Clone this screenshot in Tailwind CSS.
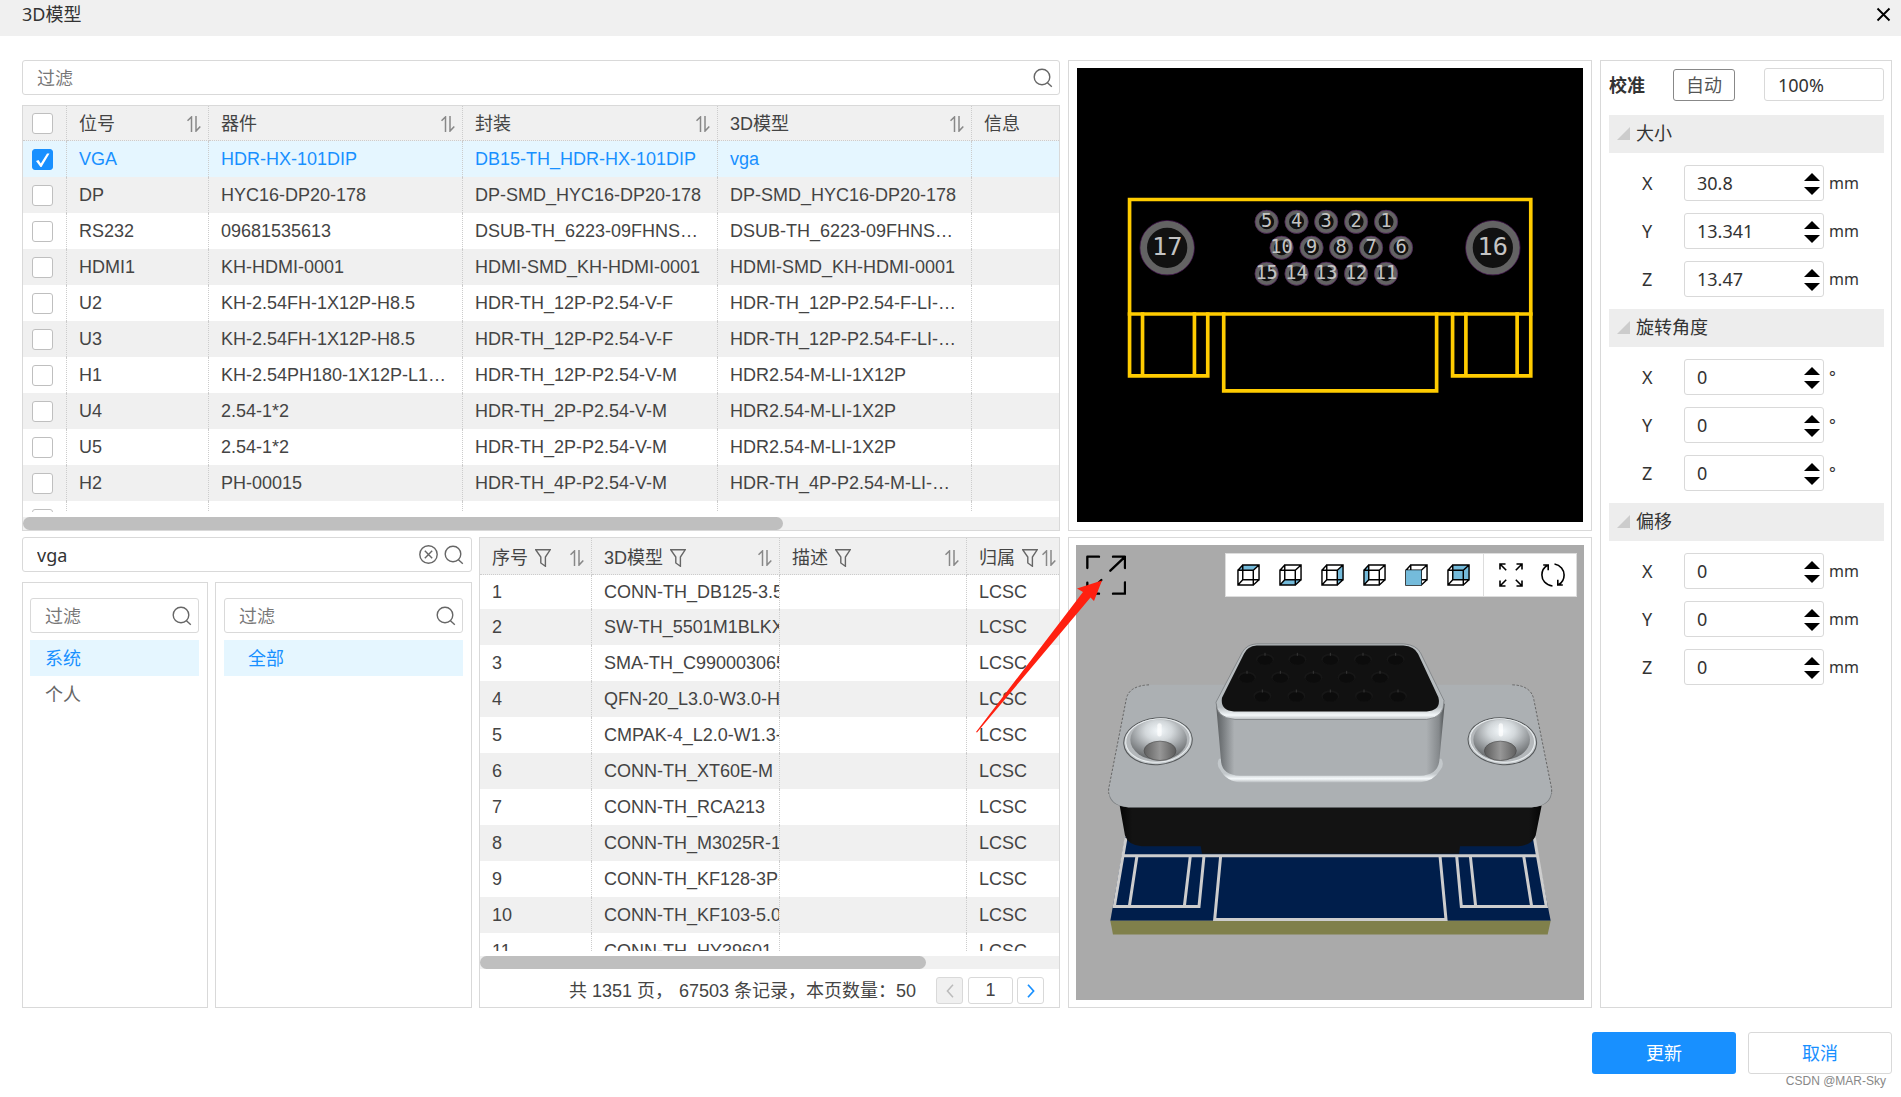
<!DOCTYPE html>
<html lang="zh-CN">
<head>
    <meta charset="UTF-8">
    <meta name="viewport" content="width=device-width, initial-scale=1.0">
    <title>3D模型</title>
    <script src="https://cdn.jsdelivr.net/npm/@tailwindcss/browser@4"></script>
</head>
<body class="relative flex flex-col h-screen min-h-[900px] bg-white text-[18px] leading-6 text-[#333] font-['Noto_Sans','Noto_Sans_CJK_SC',sans-serif]">

    <!-- Icon sprite -->
    <svg class="hidden" aria-hidden="true">
        <symbol id="i-search" viewBox="0 0 20 20"><g fill="none" stroke="currentColor" stroke-width="1.4"><circle cx="9" cy="9" r="7.8"/><path d="M14.2 14.6 18.8 18.8"/></g></symbol>
        <symbol id="i-sort" viewBox="0 0 14 16"><path d="M.5 4.8 4.5.9V16M9 0v15.1l4.3-4.6" fill="none" stroke="currentColor" stroke-width="1.5"/></symbol>
        <symbol id="i-filter" viewBox="0 0 16 18"><path d="M.8.8h14.4L10.4 8v9.2L5.8 14V8z" fill="none" stroke="currentColor" stroke-width="1.4"/></symbol>
        <symbol id="i-up" viewBox="0 0 16 8"><path d="M0 8 8 0l8 8z"/></symbol>
        <symbol id="i-down" viewBox="0 0 16 8"><path d="M0 0h16L8 8z"/></symbol>
        <symbol id="i-cube" viewBox="0 0 24 24"><path d="M1 6.5h16V22H1zM6 1h17v15.5H6zM1 6.5 6 1M17 6.5 23 1M17 22l6-5.5M1 22l5-5.5" fill="none" stroke="#000" stroke-width="1.5"/></symbol>
    </svg>

    <!-- Title bar -->
    <header class="flex items-center justify-between h-9 shrink-0 bg-[#f0f0f0] pl-[22px] pr-2.5 pb-2">
        <h1>3D模型</h1>
        <button type="button" aria-label="关闭" class="text-black">
            <svg class="w-[15px] h-[15px]" viewBox="0 0 15 15"><path d="M1.5 1.5l12 12M13.5 1.5l-12 12" stroke="currentColor" stroke-width="1.9"/></svg>
        </button>
    </header>

    <main class="grid grid-cols-[minmax(0,1038fr)_minmax(0,524fr)_292px] grid-rows-[minmax(0,1fr)_minmax(0,1fr)] gap-x-2 gap-y-1.5 flex-1 min-h-0 pt-6 pl-[22px] pr-[9px]">

        <!-- Component list -->
        <section class="flex flex-col gap-2.5 min-h-0">
            <label class="flex items-center h-[35px] shrink-0 border border-[#d9d9d9] rounded-[3px] pl-3.5 pr-1.5">
                <input type="text" placeholder="过滤" aria-label="过滤器件" class="flex-1 min-w-0 outline-none placeholder:text-[#777]">
                <svg class="w-5 h-5 text-[#666]"><use href="#i-search"/></svg>
            </label>
            <div class="flex flex-col flex-1 min-h-0 border border-[#d9d9d9]">
                <div class="flex-1 min-h-0 overflow-hidden">
                    <table class="table-fixed w-full border-separate border-spacing-0 text-left text-[#444] font-['Liberation_Sans','Noto_Sans_CJK_SC',sans-serif]">
                        <colgroup>
                            <col class="w-11"><col class="w-[142px]"><col class="w-[254px]"><col class="w-[255px]"><col class="w-[254px]"><col>
                        </colgroup>
                        <thead id="parts-head"></thead>
                        <tbody id="parts-body"></tbody>
                    </table>
                </div>
                <div class="h-[18px] shrink-0 bg-[#f0f0f0] border-t-[5px] border-white">
                    <div class="h-[13px] w-[73.4%] rounded-full bg-[#bfbfbf]"></div>
                </div>
            </div>
        </section>

        <!-- Footprint preview -->
        <section class="border border-[#d9d9d9] px-2 pt-[7px] pb-2 min-h-0 row-start-1 col-start-2">
            <svg class="w-full h-full bg-black" viewBox="21 -336 1521 1362" role="img" aria-label="封装预览">
                <g fill="none" stroke="#ffcc00" stroke-width="11" stroke-linecap="square">
                    <path d="M179 58H1385V402H179z"/>
                    <path d="M179 402V588H414V402M218 402V588M374 402V588"/>
                    <path d="M462 402V633H1102V402"/>
                    <path d="M1385 402V588H1150V402M1190 402V588M1344 402V588"/>
                </g>
                <g id="pads" fill="#c4c4c4" text-anchor="middle" font-family="'DejaVu Sans Mono', monospace"></g>
            </svg>
        </section>

        <!-- Calibration -->
        <aside class="row-span-2 row-start-1 col-start-3 border border-[#d9d9d9] pl-2 pr-[7px] pt-[7px] min-h-0 overflow-hidden">
            <div class="flex items-center mb-3.5">
                <h2 class="w-16 font-bold">校准</h2>
                <button type="button" class="w-[62px] h-8 border border-[#888] rounded-[3px] text-[#555]">自动</button>
                <input type="text" value="100%" aria-label="缩放比例" class="ml-auto w-[120px] h-[33px] px-[13px] border border-[#d9d9d9] rounded-[3px]">
            </div>
            <div id="calibration" class="flex flex-col gap-3"></div>
        </aside>

        <!-- Model library -->
        <section class="grid grid-cols-[minmax(0,450fr)_minmax(0,581fr)] gap-x-[7px] row-start-2 col-start-1 min-h-0">
            <div class="flex flex-col gap-2.5 min-h-0">
                <label class="flex items-center gap-1.5 h-[35px] shrink-0 border border-[#d9d9d9] rounded-[3px] pl-3.5 pr-[7px]">
                    <input type="text" value="vga" aria-label="搜索3D模型" class="flex-1 min-w-0 outline-none">
                    <button type="button" aria-label="清除" class="text-[#666]">
                        <svg class="w-[19px] h-[19px]" viewBox="0 0 19 19" fill="none" stroke="currentColor" stroke-width="1.4"><circle cx="9.5" cy="9.5" r="8.7"/><path d="M5.8 5.8l7.4 7.4M13.2 5.8l-7.4 7.4"/></svg>
                    </button>
                    <svg class="w-5 h-5 text-[#666]"><use href="#i-search"/></svg>
                </label>
                <div class="grid grid-cols-[minmax(0,186fr)_minmax(0,257fr)] gap-x-[7px] flex-1 min-h-0">
                    <div class="border border-[#d9d9d9] pl-[7px] pr-2 pt-[15px]">
                        <label class="flex items-center h-[35px] border border-[#d9d9d9] rounded-[3px] pl-3.5 pr-1.5 mb-[7px]">
                            <input type="text" placeholder="过滤" aria-label="过滤库" class="flex-1 min-w-0 outline-none placeholder:text-[#777]">
                            <svg class="w-5 h-5 text-[#666]"><use href="#i-search"/></svg>
                        </label>
                        <ul class="leading-9 text-[#666]">
                            <li class="bg-[#e5f6ff] text-[#1890ff] pl-[15px]">系统</li>
                            <li class="pl-[15px]">个人</li>
                        </ul>
                    </div>
                    <div class="border border-[#d9d9d9] px-2 pt-[15px]">
                        <label class="flex items-center h-[35px] border border-[#d9d9d9] rounded-[3px] pl-3.5 pr-1.5 mb-[7px]">
                            <input type="text" placeholder="过滤" aria-label="过滤分类" class="flex-1 min-w-0 outline-none placeholder:text-[#777]">
                            <svg class="w-5 h-5 text-[#666]"><use href="#i-search"/></svg>
                        </label>
                        <ul class="leading-9">
                            <li class="bg-[#e5f6ff] text-[#1890ff] pl-6">全部</li>
                        </ul>
                    </div>
                </div>
            </div>

            <div class="flex flex-col min-h-0 border border-[#d9d9d9] text-[#444] font-['Liberation_Sans','Noto_Sans_CJK_SC',sans-serif]">
                <div class="flex-1 min-h-0 overflow-hidden">
                    <table class="table-fixed w-full border-separate border-spacing-0 text-left">
                        <colgroup>
                            <col class="w-28"><col class="w-[188px]"><col class="w-[187px]"><col>
                        </colgroup>
                        <thead id="models-head"></thead>
                        <tbody id="models-body"></tbody>
                    </table>
                </div>
                <div class="h-[18px] shrink-0 bg-[#f0f0f0] border-t-[5px] border-white">
                    <div class="h-[13px] w-[77%] rounded-full bg-[#bfbfbf]"></div>
                </div>
                <nav class="flex items-center justify-end h-[38px] shrink-0 pt-[5px] pr-[15px]" aria-label="分页">
                    <span class="mr-1.5">共 1351 页，</span>
                    <span class="mr-5">67503 条记录，本页数量：50</span>
                    <button type="button" aria-label="上一页" class="flex items-center justify-center w-[27px] h-[27px] border border-[#d9d9d9] rounded-[3px] bg-[#f0f0f0] text-[#bbb] mr-[5px]">
                        <svg class="w-2 h-3.5" viewBox="0 0 8 14"><path d="M7 .7 1.4 7 7 13.3" fill="none" stroke="currentColor" stroke-width="1.5"/></svg>
                    </button>
                    <input type="text" value="1" aria-label="页码" class="w-[45px] h-[27px] border border-[#d9d9d9] rounded-[3px] text-center mr-1">
                    <button type="button" aria-label="下一页" class="flex items-center justify-center w-[27px] h-[27px] border border-[#d9d9d9] rounded-[3px] text-[#1890ff]">
                        <svg class="w-2 h-3.5" viewBox="0 0 8 14"><path d="M1 .7 6.6 7 1 13.3" fill="none" stroke="currentColor" stroke-width="1.7"/></svg>
                    </button>
                </nav>
            </div>
        </section>

        <!-- 3D preview -->
        <section class="border border-[#d9d9d9] p-[7px] row-start-2 col-start-2 min-h-0">
            <div class="relative h-full bg-[#aaa]">
                <svg class="w-full h-full" viewBox="18 45 1524 1362" role="img" aria-label="3D预览">
                    <defs>
                        <linearGradient id="shell" x1="438" x2="1124" y1="0" y2="0" gradientUnits="userSpaceOnUse">
                            <stop offset="0" stop-color="#5d6062"/><stop offset=".025" stop-color="#73777a"/><stop offset=".08" stop-color="#acb0b3"/>
                            <stop offset=".92" stop-color="#acb0b3"/><stop offset=".975" stop-color="#85898c"/><stop offset="1" stop-color="#4d5052"/>
                        </linearGradient>
                        <linearGradient id="lip" x1="0" x2="0" y1="530" y2="570" gradientUnits="userSpaceOnUse">
                            <stop offset="0" stop-color="#b7bcbf"/><stop offset=".6" stop-color="#f4f8fa"/><stop offset="1" stop-color="#acb0b3"/>
                        </linearGradient>
                        <linearGradient id="skirt" x1="0" x2="0" y1="730" y2="757" gradientUnits="userSpaceOnUse">
                            <stop offset="0" stop-color="#c3c8cb"/><stop offset=".55" stop-color="#f6fafc"/><stop offset="1" stop-color="#b0b4b7"/>
                        </linearGradient>
                        <radialGradient id="sink" cx=".5" cy=".28" r=".68">
                            <stop offset="0" stop-color="#f3f8fb"/><stop offset=".35" stop-color="#d3d8db"/><stop offset=".7" stop-color="#999da0"/><stop offset="1" stop-color="#6b6e70"/>
                        </radialGradient>
                        <linearGradient id="bore"><stop offset="0" stop-color="#606060"/><stop offset=".5" stop-color="#979797"/><stop offset="1" stop-color="#5c5c5c"/></linearGradient>
                        <linearGradient id="base"><stop offset="0" stop-color="#050505"/><stop offset=".03" stop-color="#131313"/><stop offset=".97" stop-color="#131313"/><stop offset="1" stop-color="#050505"/></linearGradient>
                    </defs>

                    <!-- board -->
                    <path d="M165 920H1393L1442 1171H121z" fill="#001e4b"/>
                    <path d="M121 1171H1442L1433 1212H129z" fill="#80804b"/>
                    <g fill="none" stroke="#cdcdcd" stroke-width="9">
                        <path d="M160 976H1402M168 922 133 1128H387L402 976M201 976 178 1128M361 976 343 1128"/>
                        <path d="M452 976 434 1167H1128L1110 976"/>
                        <path d="M1393 922 1429 1128H1174L1160 976M1201 976 1217 1128M1361 976 1385 1128"/>
                    </g>
                    <path d="M149 825 165 915Q175 945 215 947H392L396 970H1167L1170 947H1345Q1385 945 1397 915L1415 825z" fill="url(#base)"/>

                    <!-- flange -->
                    <path d="M117 790Q119 826 175 831H1385Q1441 826 1445 790V775H116z" fill="#7d8184"/>
                    <path d="M237 463H1327Q1385 465 1392 510L1445 775Q1443 828 1385 830H175Q117 826 116 775L169 505Q177 466 237 463z" fill="#acb0b3"/>
                    <path d="M237 463Q177 466 169 505L116 775V790M1327 463Q1385 465 1392 510L1445 775V790" fill="none" stroke="#666" stroke-width="3" stroke-dasharray="7 5"/>

                    <!-- mounting holes -->
                    <g id="sink-left">
                        <ellipse cx="264" cy="632" rx="103" ry="70" transform="rotate(-5 264 632)" fill="#c6cbce" stroke="#55585a" stroke-width="3"/>
                        <ellipse cx="264" cy="630" rx="97" ry="65" transform="rotate(-5 264 630)" fill="#b4b8bb" stroke="#e8ecee" stroke-width="3"/>
                        <ellipse cx="266" cy="628" rx="85" ry="61" fill="url(#sink)"/>
                        <rect x="262" y="578" width="13" height="40" rx="6" fill="#fff" opacity=".7"/>
                        <ellipse cx="270" cy="661" rx="48" ry="29" fill="url(#bore)" stroke="#4c4c4c" stroke-width="2"/>
                    </g>
                    <use href="#sink-left" transform="matrix(-1 0 0 1 1561 0)"/>

                    <!-- shell -->
                    <path d="M447 685Q438 702 450 717 470 755 515 756H1048Q1090 754 1112 717 1124 702 1114 685z" fill="url(#skirt)"/>
                    <path d="M438 520 453 690Q455 733 510 736H1050Q1104 733 1108 690L1124 520z" fill="url(#shell)"/>
                    <path d="M560 340H1000Q1040 343 1052 368L1122 510Q1124 560 1070 567H495Q438 562 438 515L517 365Q530 342 560 340z" fill="url(#lip)" stroke="#6f7375" stroke-width="2"/>
                    <path d="M560 345H1000Q1033 347 1044 370L1105 500Q1115 540 1070 543H492Q450 540 456 502L522 370Q532 347 560 345z" fill="#111"/>
                    <g id="sockets"></g>
                </svg>

                <button type="button" aria-label="全屏" class="absolute left-2.5 top-2.5">
                    <svg class="w-10 h-10" viewBox="49 75 120 120" fill="none" stroke="#000" stroke-width="7" stroke-linecap="round" stroke-linejoin="round">
                        <path d="M53 114V80H88M130 80H166V114M122 122 164 82M53 158V191H88M95 150 55 189M130 191H166V157"/>
                    </svg>
                </button>

                <div class="absolute right-[7px] top-2 flex h-11 bg-white border border-[#ddd]">
                    <div id="views" class="flex pl-px pr-1 border-r border-[#ddd]"></div>
                    <div class="flex pl-1.5 pr-0.5">
                        <button type="button" aria-label="适应窗口" class="flex items-center justify-center w-[42px]">
                            <svg class="w-6 h-6" viewBox="0 0 24 24" fill="none" stroke="#000" stroke-width="1.6"><path d="M7.2 7.2 1.5 1.5M1 6.5V1H6.5M16.8 7.2 22.5 1.5M17.5 1H23V6.5M7.2 16.8 1.5 22.5M1 17.5V23H6.5M16.8 16.8 22.5 22.5M23 17.5V23H17.5"/></svg>
                        </button>
                        <button type="button" aria-label="重置视角" class="flex items-center justify-center w-[42px]">
                            <svg class="w-6 h-6" viewBox="0 0 24 24" fill="none" stroke="#000" stroke-width="1.6"><path d="M11.5 23C4.5 22 .9 17.2.9 12 .9 8 3 4.2 6.5 2.2M2.2 2H7.2V7.2M13.5 1C19.5 2 23.1 7 23.1 12 23.1 16 21 19.8 17.500 21.800M21.800 22H16.800V16.800"/></svg>
                        </button>
                    </div>
                </div>
            </div>
        </section>
    </main>

    <footer class="flex justify-end gap-3 shrink-0 pt-6 pr-[9px] pb-[23px]">
        <button type="button" class="w-36 h-[42px] rounded-[3px] bg-[#1890ff] text-white">更新</button>
        <button type="button" class="w-36 h-[42px] rounded-[3px] border border-[#d9d9d9] text-[#1890ff]">取消</button>
    </footer>
    <p class="absolute right-[15px] bottom-2 text-xs leading-4 text-[#888] font-['Liberation_Sans',sans-serif]">CSDN @MAR-Sky</p>

    <!-- Pointer drawn over the fullscreen button -->
    <svg class="absolute left-[976px] top-[580px] w-[127px] h-[153px] pointer-events-none" viewBox="976 580 127 153" aria-hidden="true">
        <path d="M976 732 1083 592 1077 588.500 1102 580.500 1094 601 1090.500 597.500 977 732.500z" fill="#ff2010"/>
    </svg>

    <script>
        const sortIcon = '<svg class="w-3.5 h-4 shrink-0 ml-auto text-[#888]"><use href="#i-sort"/></svg>';
        const filterIcon = '<svg class="w-4 h-[18px] shrink-0 ml-[7px] text-[#666]"><use href="#i-filter"/></svg>';

        const parts = [
            ['VGA', 'HDR-HX-101DIP', 'DB15-TH_HDR-HX-101DIP', 'vga'],
            ['DP', 'HYC16-DP20-178', 'DP-SMD_HYC16-DP20-178', 'DP-SMD_HYC16-DP20-178'],
            ['RS232', '09681535613', 'DSUB-TH_6223-09FHNS…', 'DSUB-TH_6223-09FHNS…'],
            ['HDMI1', 'KH-HDMI-0001', 'HDMI-SMD_KH-HDMI-0001', 'HDMI-SMD_KH-HDMI-0001'],
            ['U2', 'KH-2.54FH-1X12P-H8.5', 'HDR-TH_12P-P2.54-V-F', 'HDR-TH_12P-P2.54-F-LI-…'],
            ['U3', 'KH-2.54FH-1X12P-H8.5', 'HDR-TH_12P-P2.54-V-F', 'HDR-TH_12P-P2.54-F-LI-…'],
            ['H1', 'KH-2.54PH180-1X12P-L1…', 'HDR-TH_12P-P2.54-V-M', 'HDR2.54-M-LI-1X12P'],
            ['U4', '2.54-1*2', 'HDR-TH_2P-P2.54-V-M', 'HDR2.54-M-LI-1X2P'],
            ['U5', '2.54-1*2', 'HDR-TH_2P-P2.54-V-M', 'HDR2.54-M-LI-1X2P'],
            ['H2', 'PH-00015', 'HDR-TH_4P-P2.54-V-M', 'HDR-TH_4P-P2.54-M-LI-…'],
            ['', '', '', '']
        ];

        const checkbox = (label, checked) => `
            <span class="relative block w-[21px] h-[21px]">
                <input type="checkbox" aria-label="${label}" ${checked ? 'checked' : ''} class="block appearance-none w-[21px] h-[21px] border border-[#bfbfbf] rounded-[3px] bg-white checked:bg-[#1890ff] checked:border-[#1890ff]">
                ${checked ? '<svg class="absolute inset-0 w-[21px] h-[21px] pointer-events-none" viewBox="0 0 21 21"><path d="M4 12 8.500 18 9.500 18 17.500 4.500 15 4.500 8.800 14.500 6.500 11z" fill="#fff"/></svg>' : ''}
            </span>`;

        document.getElementById('parts-head').innerHTML = `
            <tr class="h-[35px] bg-[#f0f0f0]">
                <th class="pl-[9px] border-b border-r border-dotted border-[#ccc]">${checkbox('全选', false)}</th>
                ${['位号', '器件', '封装', '3D模型'].map(t => `<th class="pl-3 pr-[7px] pt-0.5 font-normal border-b border-r border-dotted border-[#ccc]"><div class="flex items-center">${t}${sortIcon}</div></th>`).join('')}
                <th class="pl-3 pt-0.5 font-normal border-b border-dotted border-[#ccc]">信息</th>
            </tr>`;

        document.getElementById('parts-body').innerHTML = parts.map((row, i) => `
            <tr class="h-9 ${i === 0 ? 'bg-[#e5f6ff] text-[#1890ff]' : i % 2 ? 'bg-[#f0f0f0]' : 'bg-white'}">
                <td class="pl-[9px] border-r border-dotted border-[#ccc]">${checkbox(row[0] || '行', i === 0)}</td>
                ${row.map(t => `<td class="pl-3 whitespace-nowrap overflow-hidden border-r border-dotted border-[#ccc]">${t}</td>`).join('')}
                <td></td>
            </tr>`).join('');

        const models = [
            'CONN-TH_DB125-3.5', 'SW-TH_5501M1BLKX', 'SMA-TH_C990003065', 'QFN-20_L3.0-W3.0-H',
            'CMPAK-4_L2.0-W1.3-', 'CONN-TH_XT60E-M', 'CONN-TH_RCA213', 'CONN-TH_M3025R-1',
            'CONN-TH_KF128-3P-', 'CONN-TH_KF103-5.0', 'CONN-TH_HY39601'
        ];

        document.getElementById('models-head').innerHTML = `
            <tr class="h-[37px] bg-[#f0f0f0]">
                ${['序号', '3D模型', '描述'].map(t => `<th class="pl-3 pr-[7px] pt-[3px] font-normal border-b border-r border-dotted border-[#ccc]"><div class="flex items-center">${t}${filterIcon}${sortIcon}</div></th>`).join('')}
                <th class="pl-3 pr-[3px] pt-[3px] font-normal border-b border-dotted border-[#ccc]"><div class="flex items-center whitespace-nowrap">归属${filterIcon}${sortIcon}</div></th>
            </tr>`;

        // the first row is tucked slightly under the header
        document.getElementById('models-body').innerHTML = models.map((name, i) => `
            <tr class="${i === 0 ? 'h-[34px]' : 'h-9'} ${i % 2 ? 'bg-[#f0f0f0]' : 'bg-white'}">
                <td class="pl-3 border-r border-dotted border-[#ccc]">${i + 1}</td>
                <td class="pl-3 whitespace-nowrap overflow-hidden border-r border-dotted border-[#ccc]">${name}</td>
                <td class="border-r border-dotted border-[#ccc]"></td>
                <td class="pl-3">LCSC</td>
            </tr>`).join('');

        const groups = [
            { name: '大小', unit: 'mm', values: ['30.8', '13.341', '13.47'] },
            { name: '旋转角度', unit: '°', values: ['0', '0', '0'] },
            { name: '偏移', unit: 'mm', values: ['0', '0', '0'] }
        ];

        document.getElementById('calibration').innerHTML = groups.map((g, gi) => `
            <h3 class="flex items-center h-[38px] gap-1.5 bg-[#ededed] pl-2 pb-0.5">
                <svg class="w-[13px] h-[13px]" viewBox="0 0 13 13"><path d="M13 0v13H0z" fill="#ccc"/></svg>${g.name}
            </h3>
            ${g.values.map((v, i) => `
            <div class="flex items-center h-9 pl-[33px]">
                <label for="f${gi}${i}" class="w-[42px]">${'XYZ'[i]}</label>
                <div class="flex items-center w-[140px] h-9 pl-3 pr-[3px] border border-[#d9d9d9] rounded-[3px]">
                    <input id="f${gi}${i}" type="text" value="${v}" class="flex-1 min-w-0 outline-none">
                    <span class="flex flex-col gap-1.5 pt-0.5 text-black">
                        <button type="button" aria-label="增加"><svg class="block w-4 h-2"><use href="#i-up"/></svg></button>
                        <button type="button" aria-label="减少"><svg class="block w-4 h-2"><use href="#i-down"/></svg></button>
                    </span>
                </div>
                <span class="ml-[5px] text-base">${g.unit}</span>
            </div>`).join('')}`).join('');

        // faces of the view cube, the front one covers the edges behind it
        const faces = [
            ['俯视', 'M1 6.5 6 1H23L17 6.5z'],
            ['仰视', 'M1 22 6 16.5H23L17 22z'],
            ['右视', 'M17 6.5 23 1V16.5L17 22z'],
            ['左视', 'M1 6.5 6 1V16.5L1 22z'],
            ['前视', 'M1 6.5H17V22H1z'],
            ['后视', 'M6 1H23V16.5H6z']
        ];
        const cube = '<use href="#i-cube"/>';
        document.getElementById('views').innerHTML = faces.map(([name, d]) => {
            const face = `<path d="${d}" fill="#74bbdb"/>`;
            return `
            <button type="button" aria-label="${name}" class="flex items-center justify-center w-[42px]">
                <svg class="w-[23px] h-[23px]" viewBox="0 0 24 24">${name === '前视' ? cube + face : face + cube}</svg>
            </button>`;
        }).join('');

        const pads = [];
        [950, 860, 770, 681, 591].forEach((x, i) => pads.push([i + 1, x, 125], [i + 11, x, 281]));
        [995, 905, 815, 726, 636].forEach((x, i) => pads.push([i + 6, x, 203]));
        document.getElementById('pads').innerHTML =
            pads.map(([n, x, y]) => `
                <circle cx="${x}" cy="${y}" r="29" fill="#111" stroke="#636363" stroke-width="13"/>
                <circle cx="${x}" cy="${y}" r="35" fill="none" stroke="#4b1458" stroke-width="2"/>
                <text x="${x}" y="${y + 17}" font-size="56">${n}</text>`).join('') +
            [[17, 292], [16, 1271]].map(([n, x]) => `
                <circle cx="${x}" cy="203" r="71" fill="#111" stroke="#636363" stroke-width="21"/>
                <circle cx="${x}" cy="203" r="82" fill="none" stroke="#4b1458" stroke-width="2"/>
                <text x="${x}" y="225" font-size="76">${n}</text>`).join('');

        const sockets = [
            [386, [585, 682, 781, 879, 977]],
            [440, [531, 631, 730, 830, 930]],
            [496, [577, 679, 781, 882, 984]]
        ];
        document.getElementById('sockets').innerHTML = sockets.map(([y, xs]) => xs.map(x => `
            <ellipse cx="${x}" cy="${y}" rx="27" ry="17" fill="#171717"/>
            <ellipse cx="${x}" cy="${y + 3}" rx="23" ry="14" fill="#0c0c0c"/>
            <path d="M${x} ${y - 19}v9" stroke="#484848" stroke-width="2"/>`).join('')).join('');
    </script>
</body>
</html>
